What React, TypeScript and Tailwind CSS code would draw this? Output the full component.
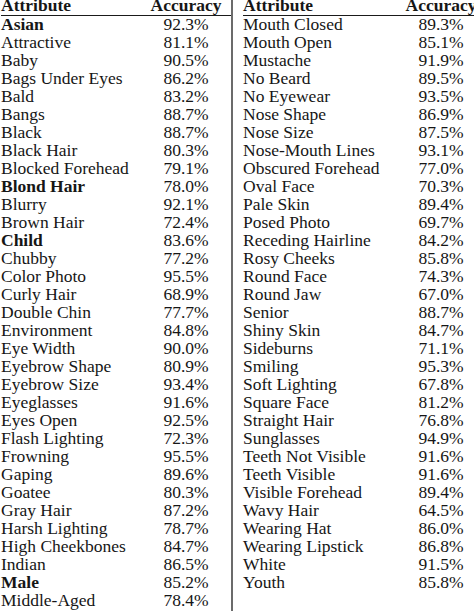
const LEFT: [string, string, boolean?][] = [
  ['Asian', '92.3%', true],
  ['Attractive', '81.1%'],
  ['Baby', '90.5%'],
  ['Bags Under Eyes', '86.2%'],
  ['Bald', '83.2%'],
  ['Bangs', '88.7%'],
  ['Black', '88.7%'],
  ['Black Hair', '80.3%'],
  ['Blocked Forehead', '79.1%'],
  ['Blond Hair', '78.0%', true],
  ['Blurry', '92.1%'],
  ['Brown Hair', '72.4%'],
  ['Child', '83.6%', true],
  ['Chubby', '77.2%'],
  ['Color Photo', '95.5%'],
  ['Curly Hair', '68.9%'],
  ['Double Chin', '77.7%'],
  ['Environment', '84.8%'],
  ['Eye Width', '90.0%'],
  ['Eyebrow Shape', '80.9%'],
  ['Eyebrow Size', '93.4%'],
  ['Eyeglasses', '91.6%'],
  ['Eyes Open', '92.5%'],
  ['Flash Lighting', '72.3%'],
  ['Frowning', '95.5%'],
  ['Gaping', '89.6%'],
  ['Goatee', '80.3%'],
  ['Gray Hair', '87.2%'],
  ['Harsh Lighting', '78.7%'],
  ['High Cheekbones', '84.7%'],
  ['Indian', '86.5%'],
  ['Male', '85.2%', true],
  ['Middle-Aged', '78.4%'],
];

const RIGHT: [string, string, boolean?][] = [
  ['Mouth Closed', '89.3%'],
  ['Mouth Open', '85.1%'],
  ['Mustache', '91.9%'],
  ['No Beard', '89.5%'],
  ['No Eyewear', '93.5%'],
  ['Nose Shape', '86.9%'],
  ['Nose Size', '87.5%'],
  ['Nose-Mouth Lines', '93.1%'],
  ['Obscured Forehead', '77.0%'],
  ['Oval Face', '70.3%'],
  ['Pale Skin', '89.4%'],
  ['Posed Photo', '69.7%'],
  ['Receding Hairline', '84.2%'],
  ['Rosy Cheeks', '85.8%'],
  ['Round Face', '74.3%'],
  ['Round Jaw', '67.0%'],
  ['Senior', '88.7%'],
  ['Shiny Skin', '84.7%'],
  ['Sideburns', '71.1%'],
  ['Smiling', '95.3%'],
  ['Soft Lighting', '67.8%'],
  ['Square Face', '81.2%'],
  ['Straight Hair', '76.8%'],
  ['Sunglasses', '94.9%'],
  ['Teeth Not Visible', '91.6%'],
  ['Teeth Visible', '91.6%'],
  ['Visible Forehead', '89.4%'],
  ['Wavy Hair', '64.5%'],
  ['Wearing Hat', '86.0%'],
  ['Wearing Lipstick', '86.8%'],
  ['White', '91.5%'],
  ['Youth', '85.8%'],
];

function AttrTable({ rows, attrWidth }: { rows: [string, string, boolean?][]; attrWidth: string }) {
  return (
    <div className="flex flex-col">
      <div className="flex h-[15.5px] leading-[10px] font-bold border-b-[1.5px] border-[#1a1a1a]">
        <div className={`${attrWidth} shrink-0`}>Attribute</div>
        <div className="w-[72px] shrink-0 text-center whitespace-nowrap">Accuracy</div>
      </div>
      <div className="-mt-[1px] flex flex-col">
        {rows.map(([name, acc, bold]) => (
          <div key={name} className="flex h-[18px] leading-[18px] whitespace-nowrap">
            <div className={`${attrWidth} shrink-0 ${bold ? 'font-bold' : ''}`}>{name}</div>
            <div className="w-[72px] shrink-0 text-center">{acc}</div>
          </div>
        ))}
      </div>
    </div>
  );
}

export default function App() {
  return (
    <div className="w-[474px] h-[611px] overflow-hidden bg-white text-[#161616] text-[17.5px] font-['Liberation_Serif',serif] flex">
      <div className="w-[231px] shrink-0 pl-[1px]">
        <AttrTable rows={LEFT} attrWidth="w-[149px]" />
      </div>
      <div className="w-[2px] shrink-0 bg-[#6b6b6b]" />
      <div className="flex-1 min-w-0">
        <div className="w-[260px] pl-[10px]">
          <AttrTable rows={RIGHT} attrWidth="w-[162px]" />
        </div>
      </div>
    </div>
  );
}
